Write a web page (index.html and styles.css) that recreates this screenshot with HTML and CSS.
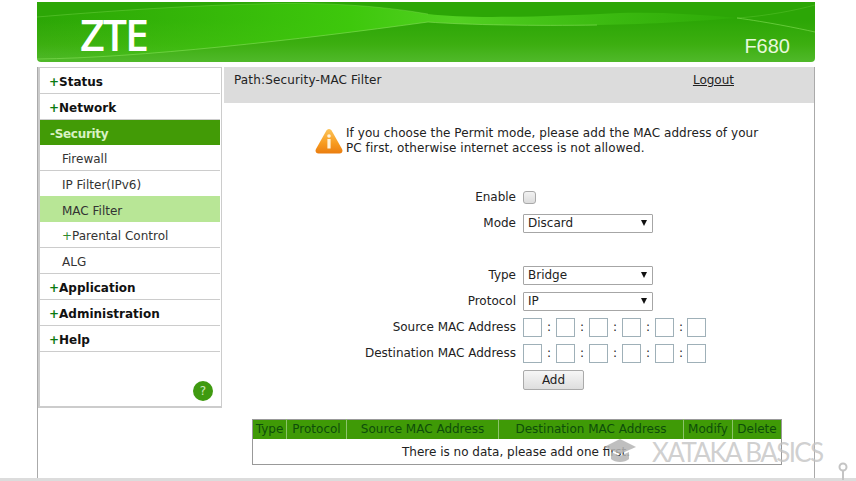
FILE: index.html
```html
<!DOCTYPE html>
<html lang="en">
<head>
    <meta charset="UTF-8">
    <meta name="viewport" content="width=device-width, initial-scale=1.0">
    <title>F680 - MAC Filter</title>
    <link rel="stylesheet" href="styles.css">
</head>
<body>
    <div class="page">
        <header class="banner">
            <svg class="banner-waves" viewBox="0 0 778 60" preserveAspectRatio="none">
                <defs>
                    <linearGradient id="lens" x1="0" y1="0" x2="1" y2="0">
                        <stop offset="0" stop-color="#3cc60a" stop-opacity="0"/>
                        <stop offset="0.45" stop-color="#3ec80c"/>
                        <stop offset="0.6" stop-color="#52d022"/>
                        <stop offset="1" stop-color="#3cc210" stop-opacity="0.2"/>
                    </linearGradient>
                </defs>
                <path d="M0 15 C60 10 140 4 220 2 C280 0 340 3 391 12 C430 17 500 15 583 11 C620 10 660 12 700 16 C660 19 620 22 560 23 C500 24 430 23 391 20 C260 38 100 56 0 57Z" fill="url(#lens)"/>
                <path d="M0 57 C100 56 260 38 391 20 C430 23 500 24 560 23" fill="none" stroke="#86e058" stroke-width="1" opacity="0.6"/>
                <path d="M0 15 C60 10 140 4 220 2 C280 0 340 3 391 12" fill="none" stroke="#86e058" stroke-width="1" opacity="0.35"/>
                <path d="M700 16 C730 20 760 26 778 30" fill="none" stroke="#86e058" stroke-width="1" opacity="0.6"/>
                <path d="M700 16 C730 14 760 8 778 3" fill="none" stroke="#86e058" stroke-width="1" opacity="0.25"/>
            </svg>
            <span class="brand">ZTE</span>
            <span class="model">F680</span>
        </header>

        <main class="main">
            <nav class="sidebar">
                <a class="nav-top"><b>+</b>Status</a>
                <a class="nav-top"><b>+</b>Network</a>
                <a class="nav-top nav-open">-Security</a>
                <a class="nav-sub">Firewall</a>
                <a class="nav-sub">IP Filter(IPv6)</a>
                <a class="nav-sub nav-current">MAC Filter</a>
                <a class="nav-sub"><i>+</i>Parental Control</a>
                <a class="nav-sub">ALG</a>
                <a class="nav-top"><b>+</b>Application</a>
                <a class="nav-top"><b>+</b>Administration</a>
                <a class="nav-top"><b>+</b>Help</a>
                <div class="help-row"><span class="help-btn">?</span></div>
            </nav>

            <section class="content">
                <div class="path-bar">
                    <span class="path-text">Path:Security-MAC Filter</span>
                    <a class="logout">Logout</a>
                </div>

                <div class="notice">
                    <svg class="notice-icon" viewBox="0 0 28 26">
                        <defs>
                            <linearGradient id="warn" x1="0" y1="0" x2="0" y2="1">
                                <stop offset="0" stop-color="#fcc45a"/>
                                <stop offset="0.6" stop-color="#f79a1e"/>
                                <stop offset="1" stop-color="#ea7d10"/>
                            </linearGradient>
                        </defs>
                        <path d="M14 1 C15.5 1 16.3 2 17 3.2 L27 21 C28.2 23.4 27 25.5 24.5 25.5 L3.5 25.5 C1 25.5 -0.2 23.4 1 21 L11 3.2 C11.7 2 12.5 1 14 1Z" fill="url(#warn)"/>
                        <rect x="12.4" y="11" width="3.2" height="9.5" fill="#fff3dc"/>
                        <circle cx="14" cy="8" r="1.8" fill="#fff3dc"/>
                    </svg>
                    <p>If you choose the Permit mode, please add the MAC address of your<br>PC first, otherwise internet access is not allowed.</p>
                </div>

                <form class="filter-form">
                    <label>Enable</label>
                    <div class="field"><input type="checkbox" class="check"></div>
                    <label>Mode</label>
                    <div class="field"><span class="select-wrap"><select><option>Discard</option></select></span></div>

                    <div class="form-gap"></div>

                    <label>Type</label>
                    <div class="field"><span class="select-wrap"><select><option>Bridge</option></select></span></div>
                    <label>Protocol</label>
                    <div class="field"><span class="select-wrap"><select><option>IP</option></select></span></div>
                    <label>Source MAC Address</label>
                    <div class="field mac">
                        <input type="text"><span>:</span><input type="text"><span>:</span><input type="text"><span>:</span><input type="text"><span>:</span><input type="text"><span>:</span><input type="text">
                    </div>
                    <label>Destination MAC Address</label>
                    <div class="field mac">
                        <input type="text"><span>:</span><input type="text"><span>:</span><input type="text"><span>:</span><input type="text"><span>:</span><input type="text"><span>:</span><input type="text">
                    </div>
                    <div></div>
                    <div class="field"><button type="button" class="add-btn">Add</button></div>
                </form>

                <table class="rules">
                    <thead>
                        <tr>
                            <th class="col-type">Type</th>
                            <th class="col-proto">Protocol</th>
                            <th class="col-src">Source MAC Address</th>
                            <th class="col-dst">Destination MAC Address</th>
                            <th class="col-mod">Modify</th>
                            <th>Delete</th>
                        </tr>
                    </thead>
                    <tbody>
                        <tr><td colspan="6">There is no data, please add one first.</td></tr>
                    </tbody>
                </table>
            </section>
        </main>
    </div>
    <div class="bottom-line"></div>

    <!-- site watermark sits on top of the screenshot -->
    <div class="watermark">
        <svg class="watermark-cap" viewBox="0 0 32 24">
            <path d="M16 0 L32 8 L16 15 L0 8Z" fill="#b5b5b5"/>
            <path d="M7 13 L16 17 L25 13 L25 20 C21 24 11 24 7 20Z" fill="#b5b5b5"/>
        </svg>
        <span class="watermark-text">XATAKA BASICS</span>
    </div>
    <svg class="pin" viewBox="0 0 12 18">
        <circle cx="6" cy="5" r="3.5" fill="none" stroke="#c4c4c4" stroke-width="2"/>
        <path d="M6 9 V18" stroke="#c4c4c4" stroke-width="2"/>
    </svg>
</body>
</html>
```

FILE: styles.css
```css
* {
    box-sizing: border-box;
}

html, body {
    height: 481px;
    overflow: hidden;
}

body {
    margin: 0;
    background: #fff;
    color: #222;
    font-family: "DejaVu Sans", sans-serif;
    font-size: 12px;
}

.page {
    width: 778px;
    margin-left: 37px;
    padding-top: 2px;
}

.banner {
    position: relative;
    height: 60px;
    display: flex;
    justify-content: space-between;
    border-radius: 0 0 4px 4px;
    background: linear-gradient(180deg, #2ca606 0%, #2ca606 30%, #3cae10 70%, #50b92a 100%);
}

.banner-waves {
    position: absolute;
    inset: 0;
    width: 100%;
    height: 100%;
}

.brand {
    position: relative;
    margin: 8px 0 0 43px;
    color: #fff;
    font-family: "Open Sans", sans-serif;
    font-size: 43px;
    font-weight: 600;
    line-height: 50px;
    letter-spacing: -2px;
}

.model {
    position: relative;
    margin: 32px 25px 0 0;
    color: #e8f8dc;
    font-family: "Liberation Sans", sans-serif;
    font-size: 20px;
    line-height: 24px;
}

.main {
    display: flex;
    height: 411px;
    margin-top: 5px;
    border-left: 1px solid #aaa;
    border-right: 1px solid #aaa;
}

.sidebar {
    flex: none;
    display: flex;
    flex-direction: column;
    width: 184px;
    height: 341px;
    border: 2px solid #ccc;
    border-top-width: 1px;
    border-right-width: 1px;
    padding-right: 1px;
}

.sidebar a {
    height: 26px;
    flex: none;
    line-height: 29px;
    border-bottom: 1px solid #ccc;
}

.nav-top {
    padding-left: 9px;
    color: #111;
    font-size: 12px;
    font-weight: bold;
}

.nav-top b {
    color: #0a7a10;
}

.sidebar .nav-open {
    height: 25px;
    padding-left: 10px;
    background: #429b06;
    border-bottom: none;
    color: #d9f2c4;
    letter-spacing: -0.3px;
}

.nav-sub {
    padding-left: 22px;
    color: #333;
}

.nav-sub i {
    color: #2e8b2e;
    font-style: normal;
}

.sidebar .nav-current {
    margin-top: -1px;
    background: #b8e696;
    border-bottom: none;
    line-height: 31px;
}

.help-row {
    flex: 1;
    display: flex;
    align-items: flex-end;
    justify-content: flex-end;
    padding: 0 7px 5px 0;
}

.help-btn {
    width: 20px;
    height: 20px;
    border-radius: 50%;
    background: #3f9a10;
    color: #cfe8bd;
    text-align: center;
    line-height: 20px;
}

.content {
    flex: 1;
    margin-left: 2px;
}

.path-bar {
    display: flex;
    justify-content: space-between;
    height: 36px;
    padding: 6px 80px 0 10px;
    background: #dcdcdc;
    line-height: 15px;
}

.path-text {
    letter-spacing: 0.15px;
}

.logout {
    text-decoration: underline;
}

.notice {
    display: flex;
    align-items: center;
    gap: 3px;
    margin: 23px 0 0 91px;
}

.notice p {
    margin: 0;
    line-height: 15px;
    letter-spacing: 0.06px;
}

.notice-icon {
    width: 28px;
    height: 26px;
}

.filter-form {
    display: grid;
    grid-template-columns: 292px 1fr;
    grid-auto-rows: 26px;
    column-gap: 7px;
    margin-top: 28px;
}

.filter-form label {
    align-self: center;
    text-align: right;
}

.form-gap {
    grid-column: 1 / -1;
}

.field {
    display: flex;
    align-items: center;
}

.check {
    appearance: none;
    width: 13px;
    height: 13px;
    margin: 0;
    border: 1px solid #a9a9a9;
    border-radius: 3px;
    background: linear-gradient(180deg, #f2f2f2, #dcdcdc);
}

.select-wrap {
    position: relative;
    display: block;
    width: 130px;
    height: 19px;
}

.select-wrap::after {
    content: "";
    position: absolute;
    top: 6px;
    right: 6px;
    border-left: 3px solid transparent;
    border-right: 3px solid transparent;
    border-top: 6px solid #111;
}

.select-wrap select {
    appearance: none;
    width: 100%;
    height: 100%;
    padding: 0 4px;
    border: 1px solid #a6a6a6;
    border-radius: 1px;
    background: #fff;
    color: #222;
    font: 12px "DejaVu Sans", sans-serif;
}

.mac input {
    width: 19px;
    height: 19px;
    padding: 0;
    border: 1px solid #9fb0b8;
    background: #fff;
}

.mac input:last-child {
    margin-left: -1px;
}

.mac span {
    width: 14px;
    text-align: center;
}

.add-btn {
    width: 61px;
    height: 20px;
    margin-top: 1px;
    padding: 0;
    border: 1px solid #aaa;
    border-radius: 2px;
    background: linear-gradient(180deg, #f6f6f6, #dedede);
    color: #222;
    font: 12px "DejaVu Sans", sans-serif;
}

.rules {
    width: 530px;
    height: 46px;
    margin: 27px 0 0 28px;
    border-collapse: collapse;
    table-layout: fixed;
    border: 1px solid #999;
}

.rules th {
    height: 19px;
    padding: 0;
    background: #3f9a06;
    border-left: 1px solid #8cc36b;
    color: #0e4d0a;
    font-weight: normal;
    font-size: 12px;
}

.rules th:first-child {
    border-left: none;
}

.rules td {
    height: 26px;
    padding: 2px 2px 0 0;
    text-align: center;
}

.col-type { width: 34px; }
.col-proto { width: 60px; }
.col-src { width: 152px; }
.col-dst { width: 185px; }
.col-mod { width: 49px; }

.bottom-line {
    height: 3px;
    background: #dcdcdc;
}

.watermark {
    position: absolute;
    left: 604px;
    top: 438px;
    display: flex;
    align-items: center;
    gap: 16px;
    color: rgba(195, 195, 195, 0.8);
    font-family: "Lato", sans-serif;
    font-size: 26px;
    line-height: 24px;
    letter-spacing: -1.6px;
    white-space: nowrap;
}

.watermark-text {
    padding-top: 2px;
}

.watermark-cap {
    width: 32px;
    height: 24px;
    opacity: 0.85;
}

.pin {
    position: absolute;
    left: 837px;
    top: 462px;
    width: 12px;
    height: 18px;
}
```
